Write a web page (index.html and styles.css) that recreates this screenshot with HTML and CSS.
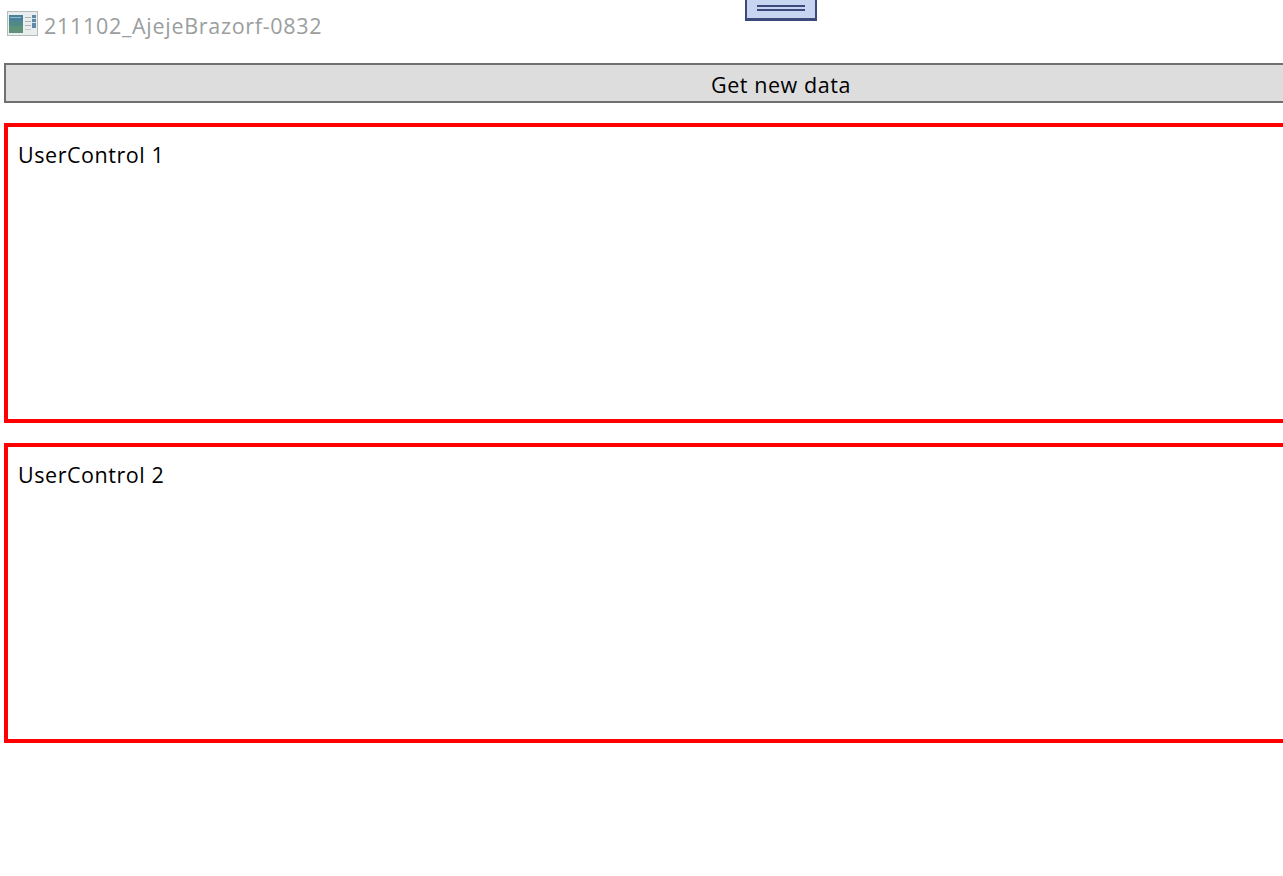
FILE: index.html
```html
<!DOCTYPE html>
<html lang="en">
<head>
<meta charset="utf-8">
<title>211102_AjejeBrazorf-0832</title>
<link rel="stylesheet" href="styles.css">
</head>
<body>
<div class="handle"><span class="handle-line"></span><span class="handle-line"></span></div>
<main class="window">
  <header class="titlebar">
    <svg class="app-icon" viewBox="0 0 31 25" width="31" height="25" aria-hidden="true">
      <rect x="0.5" y="0.5" width="30" height="24" fill="#e9eded" stroke="#b4bcbc"/>
      <rect x="2" y="4" width="14" height="18" fill="#4f8a88"/>
      <rect x="2" y="4" width="14" height="6" fill="#4a8099"/>
      <rect x="2" y="15" width="14" height="7" fill="#5f9078"/>
      <rect x="3" y="6" width="11" height="1" fill="#8fbccb"/>
      <rect x="18" y="6" width="6" height="1" fill="#aab3b3"/>
      <rect x="18" y="10" width="6" height="1" fill="#aab3b3"/>
      <rect x="18" y="14" width="6" height="1" fill="#aab3b3"/>
      <rect x="18" y="18" width="6" height="1" fill="#c5cccc"/>
      <rect x="25" y="4" width="4" height="13" fill="#5d8aa6"/>
      <rect x="25" y="7" width="4" height="1" fill="#d5dfe5"/>
      <rect x="25" y="11" width="4" height="1" fill="#d5dfe5"/>
    </svg>
    <span class="title">211102_AjejeBrazorf-0832</span>
  </header>
  <button class="action" type="button">Get new data</button>
  <section class="control">UserControl 1</section>
  <section class="control">UserControl 2</section>
</main>
</body>
</html>
```
FILE: styles.css
```css
html, body {
  margin: 0;
  height: 100%;
  background: #fff;
  overflow: hidden;
}
body {
  position: relative;
  font-family: "Open Sans", "Noto Sans", sans-serif;
  font-size: 21.5px;
  color: #000;
}
.handle {
  position: absolute;
  left: 745px;
  top: 0;
  width: 68px;
  height: 13px;
  border: 2px solid #3b4a7a;
  border-top: 0;
  border-bottom-width: 3px;
  background: #c8d5f0;
  display: flex;
  flex-direction: column;
  align-items: center;
  gap: 2px;
  padding-top: 5px;
  box-sizing: content-box;
}
.handle-line {
  width: 48px;
  height: 2px;
  background: #3b4a7a;
}
.window {
  width: 1554px;
  padding: 0 0 0 4px;
  display: flex;
  flex-direction: column;
}
.titlebar {
  height: 63px;
  display: flex;
  align-items: flex-start;
  gap: 6px;
  padding: 11px 0 0 3px;
  box-sizing: border-box;
}
.app-icon {
  flex: none;
}
.title {
  color: #9a9e9e;
  letter-spacing: 0.7px;
  line-height: 30px;
}
.action {
  height: 40px;
  width: 100%;
  padding: 3px 0 0;
  border: 2px solid #707070;
  background: #ddd;
  font: inherit;
  letter-spacing: 0.56px;
  color: #000;
}
.control {
  height: 300px;
  margin-top: 20px;
  padding: 13px 10px;
  border: 4px solid #f00;
  box-sizing: border-box;
  letter-spacing: 0.55px;
  line-height: 30px;
}
```
